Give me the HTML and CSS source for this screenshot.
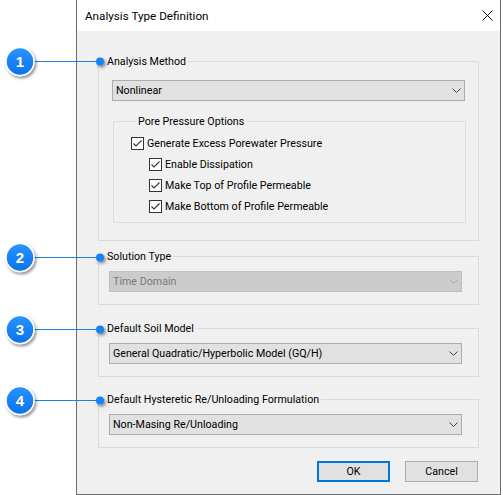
FILE: index.html
```html
<!DOCTYPE html>
<html lang="en">
<head>
    <meta charset="UTF-8">
    <title>Analysis Type Definition</title>
    <link rel="stylesheet" href="styles.css">
</head>
<body>
    <div class="dialog">
        <div class="titlebar">
            <span class="title">Analysis Type Definition</span>
            <svg class="close" width="11" height="11" viewBox="0 0 11 11">
                <path d="M0.5 0.5 L10.5 10.5 M10.5 0.5 L0.5 10.5" stroke="#000" stroke-width="1" fill="none"/>
            </svg>
        </div>

        <div class="client">
            <!-- analysis method -->
            <fieldset class="group method">
                <legend>Analysis Method</legend>
                <div class="select">
                    <span>Nonlinear</span>
                    <svg class="chevron" width="9" height="5" viewBox="0 0 9 5"><polyline points="0.5,0.5 4.5,4.5 8.5,0.5"/></svg>
                </div>
                <fieldset class="group pore">
                    <legend>Pore Pressure Options</legend>
                    <div class="check">
                        <svg class="box" width="13" height="13" viewBox="0 0 13 13"><rect x="0.5" y="0.5" width="12" height="12"/><polyline points="2.5,6.5 5,9 10.5,3.5"/></svg>
                        <span>Generate Excess Porewater Pressure</span>
                    </div>
                    <div class="sub">
                        <div class="check">
                            <svg class="box" width="13" height="13" viewBox="0 0 13 13"><rect x="0.5" y="0.5" width="12" height="12"/><polyline points="2.5,6.5 5,9 10.5,3.5"/></svg>
                            <span>Enable Dissipation</span>
                        </div>
                        <div class="check">
                            <svg class="box" width="13" height="13" viewBox="0 0 13 13"><rect x="0.5" y="0.5" width="12" height="12"/><polyline points="2.5,6.5 5,9 10.5,3.5"/></svg>
                            <span>Make Top of Profile Permeable</span>
                        </div>
                        <div class="check">
                            <svg class="box" width="13" height="13" viewBox="0 0 13 13"><rect x="0.5" y="0.5" width="12" height="12"/><polyline points="2.5,6.5 5,9 10.5,3.5"/></svg>
                            <span>Make Bottom of Profile Permeable</span>
                        </div>
                    </div>
                </fieldset>
            </fieldset>

            <!-- solution type -->
            <fieldset class="group solution">
                <legend>Solution Type</legend>
                <div class="select disabled">
                    <span>Time Domain</span>
                    <svg class="chevron" width="9" height="5" viewBox="0 0 9 5"><polyline points="0.5,0.5 4.5,4.5 8.5,0.5"/></svg>
                </div>
            </fieldset>

            <!-- soil model -->
            <fieldset class="group soil">
                <legend>Default Soil Model</legend>
                <div class="select">
                    <span>General Quadratic/Hyperbolic Model (GQ/H)</span>
                    <svg class="chevron" width="9" height="5" viewBox="0 0 9 5"><polyline points="0.5,0.5 4.5,4.5 8.5,0.5"/></svg>
                </div>
            </fieldset>

            <!-- hysteretic formulation -->
            <fieldset class="group hyst">
                <legend>Default Hysteretic Re/Unloading Formulation</legend>
                <div class="select">
                    <span>Non-Masing Re/Unloading</span>
                    <svg class="chevron" width="9" height="5" viewBox="0 0 9 5"><polyline points="0.5,0.5 4.5,4.5 8.5,0.5"/></svg>
                </div>
            </fieldset>

            <div class="buttons">
                <button class="btn default">OK</button>
                <button class="btn">Cancel</button>
            </div>
        </div>
    </div>

    <!-- numbered callouts drawn over the dialog -->
    <svg class="callouts" width="503" height="495" viewBox="0 0 503 495">
        <defs>
            <filter id="shadow" x="-60%" y="-60%" width="220%" height="220%">
                <feDropShadow dx="1.5" dy="2" stdDeviation="1.5" flood-color="#000" flood-opacity="0.45"/>
            </filter>
            <linearGradient id="badge" x1="0" y1="0" x2="0" y2="1">
                <stop offset="0" stop-color="#2a94ff"/>
                <stop offset="1" stop-color="#0b72ea"/>
            </linearGradient>
        </defs>
        <g transform="translate(0,61)">
            <line x1="34" y1="0.5" x2="100" y2="0.5" class="lead"/>
            <circle cx="100" cy="0.5" r="4" class="dot" filter="url(#shadow)"/>
            <circle cx="20" cy="0.5" r="14" class="badge" filter="url(#shadow)"/>
            <text x="20" y="5.5">1</text>
        </g>
        <g transform="translate(0,257)">
            <line x1="34" y1="0.5" x2="100" y2="0.5" class="lead"/>
            <circle cx="100" cy="0.5" r="4" class="dot" filter="url(#shadow)"/>
            <circle cx="20" cy="0.5" r="14" class="badge" filter="url(#shadow)"/>
            <text x="20" y="5.5">2</text>
        </g>
        <g transform="translate(0,329)">
            <line x1="34" y1="0.5" x2="100" y2="0.5" class="lead"/>
            <circle cx="100" cy="0.5" r="4" class="dot" filter="url(#shadow)"/>
            <circle cx="20" cy="0.5" r="14" class="badge" filter="url(#shadow)"/>
            <text x="20" y="5.5">3</text>
        </g>
        <g transform="translate(0,400)">
            <line x1="34" y1="0.5" x2="100" y2="0.5" class="lead"/>
            <circle cx="100" cy="0.5" r="4" class="dot" filter="url(#shadow)"/>
            <circle cx="20" cy="0.5" r="14" class="badge" filter="url(#shadow)"/>
            <text x="20" y="5.5">4</text>
        </g>
    </svg>
</body>
</html>
```

FILE: styles.css
```css
* {
    box-sizing: border-box;
}
body {
    margin: 0;
    width: 503px;
    height: 495px;
    overflow: hidden;
    position: relative;
    background: #fff;
    font-family: Roboto, "Noto Sans", sans-serif;
    font-size: 10.7px;
    color: #000;
}
.dialog {
    margin-left: 76px;
    width: 425px;
    height: 495px;
    border: 1px solid #6e6e6e;
    border-top: none;
    background: #f0f0f0;
    display: flex;
    flex-direction: column;
}
.titlebar {
    height: 31px;
    flex: none;
    background: #fff;
    display: flex;
    align-items: center;
    justify-content: space-between;
    padding: 0 7px 0 8px;
}
.title {
    font-size: 11.7px;
}
.close {
    display: block;
}
.client {
    padding: 0 21px;
    display: flex;
    flex-direction: column;
}
.group {
    margin: 0;
    padding: 0 0 12px 0;
    border: 1px solid #dcdcdc;
    min-width: 0;
}
.group legend {
    margin-left: 6px;
    padding: 0 2px;
    line-height: 17px;
}
.select {
    height: 21px;
    margin: 6px 16px 0 10px;
    padding: 0 3px 0 3px;
    border: 1px solid #adadad;
    background: #e1e1e1;
    display: flex;
    align-items: center;
    justify-content: space-between;
}
.chevron {
    display: block;
}
.chevron polyline {
    fill: none;
    stroke: #444;
    stroke-width: 1;
}
.select.disabled {
    background: #cccccc;
    border-color: #bfbfbf;
    color: #7a7a7a;
}
.select.disabled .chevron polyline {
    stroke: #a6a6a6;
}
.method {
    margin-top: 22px;
    padding-bottom: 17px;
}
.method > .select {
    margin: 10px 13px 0 13px;
}
.pore {
    margin: 12px 12px 0 14px;
    padding: 3px 0 5px 17px;
}
.pore legend {
    margin-left: 5px;
}
.check {
    height: 21px;
    display: flex;
    align-items: center;
    gap: 3px;
}
.box {
    display: block;
    flex: none;
}
.box rect {
    fill: #fff;
    stroke: #333;
}
.box polyline {
    fill: none;
    stroke: #333;
    stroke-width: 1.1;
}
.sub {
    padding-left: 18px;
}
.solution {
    margin-top: 7px;
}
.soil {
    margin-top: 15px;
}
.hyst {
    margin-top: 14px;
}
.buttons {
    display: flex;
    justify-content: flex-end;
    gap: 15px;
    margin: 13px 1px 0 0;
}
.btn {
    width: 73px;
    height: 21px;
    padding: 0;
    border: 1px solid #adadad;
    background: #e1e1e1;
    font: inherit;
    color: #000;
}
.btn.default {
    border: 2px solid #0078d7;
}
.callouts {
    position: absolute;
    left: 0;
    top: 0;
    pointer-events: none;
}
.callouts .lead {
    stroke: #1f7fe6;
    stroke-width: 1;
}
.callouts .dot {
    fill: #1483f5;
}
.callouts .badge {
    fill: url(#badge);
    stroke: #fff;
    stroke-width: 1.5;
}
.callouts text {
    fill: #fff;
    font-family: "Liberation Sans", Arial, sans-serif;
    font-weight: bold;
    font-size: 15px;
    text-anchor: middle;
}
```
